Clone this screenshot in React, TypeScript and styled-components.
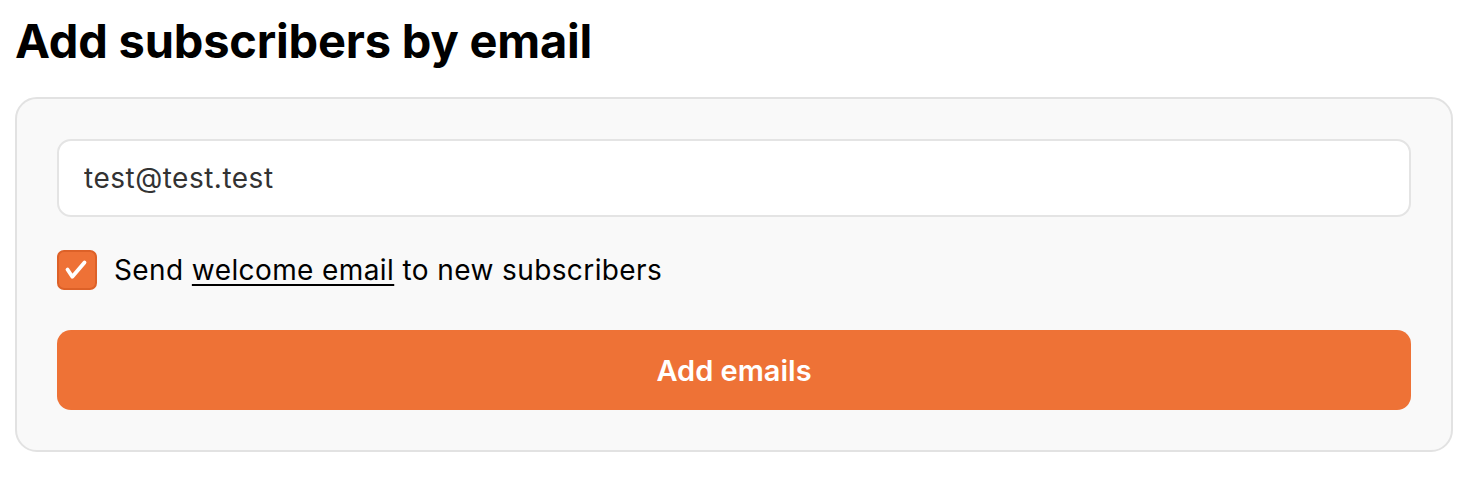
import React, { useState } from "react";
import styled, { createGlobalStyle } from "styled-components";

const GlobalStyle = createGlobalStyle`
  * { box-sizing: border-box; }
  body {
    margin: 0;
    background: #ffffff;
    font-family: Inter, "Noto Sans", sans-serif;
    color: #000;
  }
`;

const Page = styled.div`
  padding: 12px 15px;
`;

const Title = styled.h1`
  margin: 0 0 27px;
  font-size: 47px;
  line-height: 58px;
  font-weight: 700;
  letter-spacing: -0.2px;
`;

const Card = styled.form`
  width: 1438px;
  display: flex;
  flex-direction: column;
  padding: 40px;
  background: #f9f9f9;
  border: 2px solid #e2e2e2;
  border-radius: 22px;
`;

const EmailInput = styled.input`
  height: 78px;
  padding: 0 25px;
  font-family: inherit;
  font-size: 28px;
  letter-spacing: 0.5px;
  color: #333;
  background: #fff;
  border: 2px solid #e4e4e4;
  border-radius: 14px;
  outline: none;
`;

const CheckRow = styled.label`
  display: flex;
  align-items: center;
  gap: 17px;
  margin: 33px 0 40px;
  font-size: 28px;
  letter-spacing: 0.4px;
  line-height: 40px;
  cursor: pointer;
`;

const Box = styled.span<{ $checked: boolean }>`
  width: 40px;
  height: 40px;
  flex: none;
  display: flex;
  border-radius: 7px;
  background: ${(p) => (p.$checked ? "#ee7136" : "#fff")};
  border: 2px solid ${(p) => (p.$checked ? "#dd6128" : "#d6d6d6")};
`;

const Link = styled.a`
  color: inherit;
  text-decoration: underline;
  text-underline-offset: 4px;
  text-decoration-thickness: 2px;
`;

const Submit = styled.button`
  height: 80px;
  border: none;
  border-radius: 14px;
  background: #ee7236;
  color: #fff;
  font-family: inherit;
  font-size: 29px;
  font-weight: 600;
  cursor: pointer;
`;

export default function App() {
  const [checked, setChecked] = useState(true);

  return (
    <Page>
      <GlobalStyle />
      <Title>Add subscribers by email</Title>
      <Card onSubmit={(e) => e.preventDefault()}>
        <EmailInput defaultValue="test@test.test" />
        <CheckRow onClick={() => setChecked(!checked)}>
          <Box $checked={checked}>
            {checked && (
              <svg width="36" height="36" viewBox="0 0 36 36" fill="none">
                <path
                  d="M8.5 17.5l4.8 7.2L25.5 10.5"
                  stroke="#fff"
                  strokeWidth="3.8"
                  strokeLinecap="round"
                  strokeLinejoin="round"
                />
              </svg>
            )}
          </Box>
          <span>
            Send <Link href="#">welcome email</Link> to new subscribers
          </span>
        </CheckRow>
        <Submit type="submit">Add emails</Submit>
      </Card>
    </Page>
  );
}
